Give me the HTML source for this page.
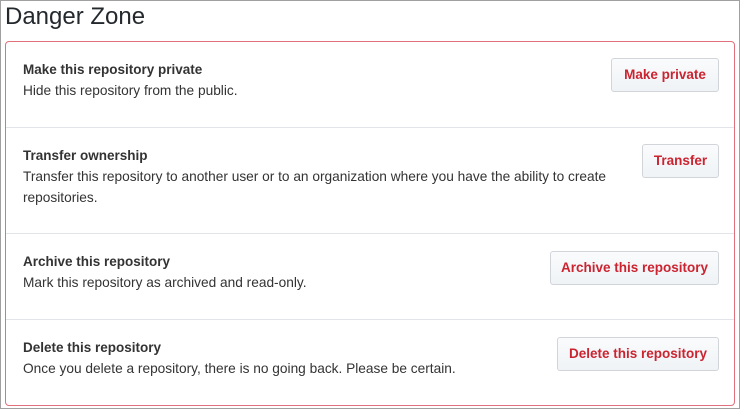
<!DOCTYPE html>
<html><head><style>
body{margin:0;width:740px;height:409px;background:#fff;font-family:"Liberation Sans",sans-serif;position:relative;overflow:hidden;color:#24292e}
.frame{position:absolute;left:0;top:0;width:738px;height:407px;border:1px solid #a0a0a0}
h1{position:absolute;left:5px;top:3px;margin:0;font-weight:400;font-size:24px;color:#24292e}
.box{position:absolute;left:5px;top:41px;width:728px;height:363px;border:1px solid #e0707b;border-radius:4px}
.hr{position:absolute;left:6px;width:728px;height:1px;background:#e1e4e8}
.t{position:absolute;left:23px;font-size:13.5px;font-weight:bold;color:#333}
.d{position:absolute;left:23px;font-size:13.7px;line-height:21px;color:#333}
.b{position:absolute;height:32px;border:1px solid #d1d5da;border-radius:3px;background:linear-gradient(#fafbfc,#eff3f6);color:#cb2431;font-weight:bold;font-size:13.5px;line-height:32px;text-align:center;box-sizing:content-box}
</style></head><body>
<div class="frame"></div>
<h1>Danger Zone</h1>
<div class="box"></div>
<div class="hr" style="top:127px"></div>
<div class="hr" style="top:233px"></div>
<div class="hr" style="top:319px"></div>

<div class="t" style="top:62px">Make this repository private</div>
<div class="d" style="top:80px">Hide this repository from the public.</div>
<div class="b" style="left:611px;top:58px;width:106px">Make private</div>

<div class="t" style="top:148px">Transfer ownership</div>
<div class="d" style="top:166px">Transfer this repository to another user or to an organization where you have the ability to create<br>repositories.</div>
<div class="b" style="left:642px;top:144px;width:75px">Transfer</div>

<div class="t" style="top:254px">Archive this repository</div>
<div class="d" style="top:272px">Mark this repository as archived and read-only.</div>
<div class="b" style="left:550px;top:251px;width:167px">Archive this repository</div>

<div class="t" style="top:340px">Delete this repository</div>
<div class="d" style="top:358px">Once you delete a repository, there is no going back. Please be certain.</div>
<div class="b" style="left:557px;top:337px;width:160px">Delete this repository</div>
</body></html>
